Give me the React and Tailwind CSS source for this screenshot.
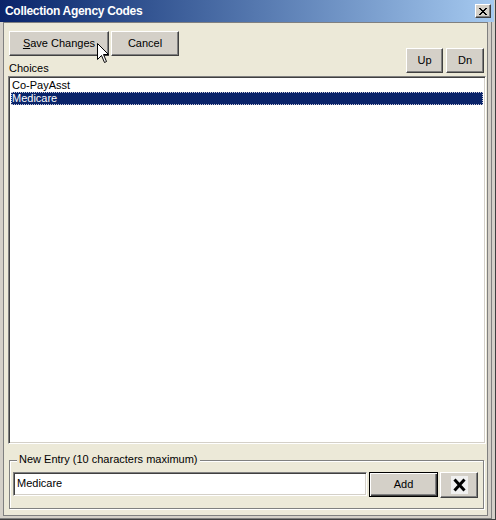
import React from 'react';

const raised =
  'bg-[#d4d0c8] border border-t-white border-l-white border-r-[#404040] border-b-[#404040] shadow-[inset_-1px_-1px_0_#808080]';
const sunken =
  'border border-t-[#808080] border-l-[#808080] border-r-white border-b-white shadow-[inset_1px_1px_0_#404040,inset_-1px_-1px_0_#d4d0c8]';

function Cursor() {
  return (
    <svg className="absolute left-[97px] top-[43px]" width="13" height="21" viewBox="0 0 13 21">
      <path
        d="M0.5 0.5 L0.5 16.5 L4.5 12.5 L7.5 19.5 L9.5 18.5 L6.5 11.5 L11.5 11.5 Z"
        fill="#fff"
        stroke="#000"
        strokeWidth="1"
        strokeLinejoin="miter"
      />
    </svg>
  );
}

export default function App() {
  const items = [
    { label: 'Co-PayAsst', selected: false },
    { label: 'Medicare', selected: true },
  ];

  return (
    <div className="relative flex h-[520px] w-[496px] flex-col overflow-hidden border-r border-b border-[#404040] bg-[#d4d0c8] font-['Liberation_Sans',Arial,sans-serif] text-[11px] text-black">
      {/* title bar */}
      <div className="mr-[1px] flex h-[22px] shrink-0 items-center justify-between bg-linear-to-r from-[#0a246a] to-[#a6caf0] pl-[5px] pr-[3px]">
        <span className="text-[12px] font-bold tracking-[-0.3px] text-white">Collection Agency Codes</span>
        <button className={`${raised} flex h-[14px] w-[16px] items-center justify-center`}>
          <svg width="8" height="7" viewBox="0 0 8 7">
            <path d="M0 0 L7 7 M1 0 L8 7 M7 0 L0 7 M8 0 L1 7" stroke="#000" strokeWidth="1" />
          </svg>
        </button>
      </div>

      <div className="flex flex-1 pr-[3px]">
        <div className="flex flex-1 border-r border-b border-[#808080] pl-[3px] pr-[3px] pb-[2px]">
          <div className="flex flex-1 flex-col border-l border-t border-r border-b border-l-[#808080] border-t-[#808080] border-r-[#808080] border-b-[#808080] bg-[#ece9d8] pt-[8px]">
            {/* header */}
            <div className="flex h-[45px]">
              <div className="flex flex-col pl-[5px]">
                <div className="flex gap-[2px]">
                  <button className={`${raised} h-[25px] w-[100px]`}>
                    <span className="underline underline-offset-1">S</span>ave Changes
                  </button>
                  <button className={`${raised} h-[25px] w-[68px]`}>Cancel</button>
                </div>
                <div className="mt-[6px] leading-[13px]">Choices</div>
              </div>
              <div className="ml-auto flex gap-[3px] pt-[17px] pr-[3px]">
                <button className={`${raised} h-[25px] w-[37px]`}>Up</button>
                <button className={`${raised} h-[25px] w-[38px]`}>Dn</button>
              </div>
            </div>

            {/* list */}
            <div className={`${sunken} ml-[4px] flex h-[368px] w-[478px] flex-col bg-white p-[2px]`}>
              {items.map((it) => (
                <div
                  key={it.label}
                  className={
                    it.selected
                      ? 'h-[13px] border border-dotted border-[#c8c8d8] bg-[#0a246a] leading-[11px] text-white'
                      : 'h-[13px] pl-[1px] leading-[13px]'
                  }
                >
                  {it.label}
                </div>
              ))}
            </div>

            {/* new entry group */}
            <div className="relative mt-[16px] ml-[5px] w-[475px] border border-[#808080] pt-[11px] pb-[10px] pl-[3px] shadow-[inset_1px_1px_0_#fff,1px_1px_0_#fff]">
              <span className="absolute left-[7px] top-[-8px] bg-[#ece9d8] px-[2px] leading-[13px]">
                New Entry (10 characters maximum)
              </span>
              <div className="flex items-start gap-[2px]">
                <div className={`${sunken} flex h-[24px] w-[354px] items-start bg-white pl-[3px] pt-[4px] leading-[13px]`}>
                  Medicare
                </div>
                <button className="h-[25px] w-[69px] border border-black bg-[#d4d0c8] shadow-[inset_1px_1px_0_#fff,inset_-1px_-1px_0_#404040,inset_-2px_-2px_0_#808080]">
                  Add
                </button>
                <button className={`${raised} flex h-[26px] w-[38px] items-center justify-center`}>
                  <svg width="17" height="18" viewBox="0 0 17 18">
                    <rect width="17" height="18" fill="#f0f0f0" />
                    <path d="M3.5 3.5 L13.5 14.5 M13.5 3.5 L3.5 14.5" stroke="#000" strokeWidth="3" />
                  </svg>
                </button>
              </div>
            </div>
          </div>
        </div>
      </div>
      <Cursor />
    </div>
  );
}
